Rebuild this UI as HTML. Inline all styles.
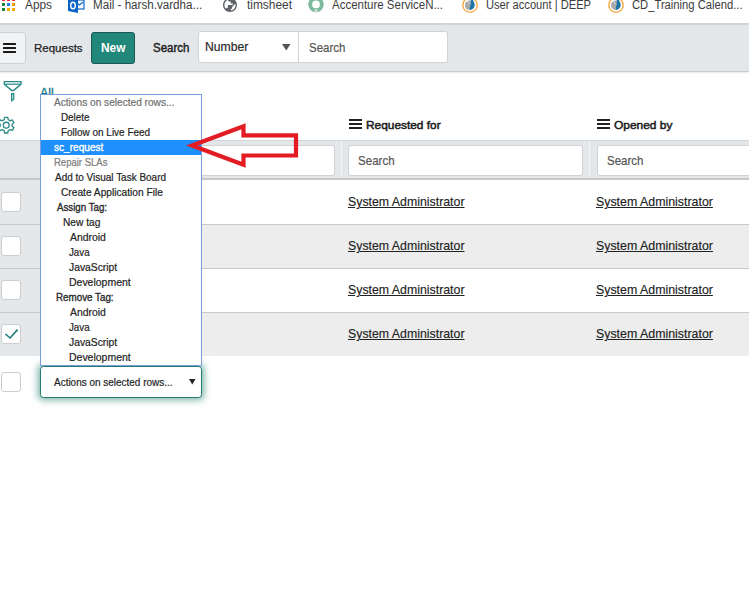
<!DOCTYPE html>
<html><head><meta charset="utf-8"><style>
html,body{margin:0;padding:0;width:749px;height:591px;overflow:hidden;background:#fff;position:relative;font-family:"Liberation Sans",sans-serif;}
.a{position:absolute;box-sizing:border-box;}
.t{position:absolute;white-space:nowrap;transform-origin:0 0;}
</style></head><body>
<!-- bookmarks bar -->
<div class="a" style="left:2px;top:-2px;width:3px;height:3px;background:#ee2a24"></div>
<div class="a" style="left:7px;top:-2px;width:3px;height:3px;background:#ee2a24"></div>
<div class="a" style="left:12px;top:-2px;width:3px;height:3px;background:#ee2a24"></div>
<div class="a" style="left:2px;top:3px;width:3px;height:3px;background:#1a8a3a"></div>
<div class="a" style="left:7px;top:3px;width:3px;height:3px;background:#1a7cf0"></div>
<div class="a" style="left:12px;top:3px;width:3px;height:3px;background:#ee9a00"></div>
<div class="a" style="left:2px;top:8px;width:3px;height:3px;background:#1a8a3a"></div>
<div class="a" style="left:7px;top:8px;width:3px;height:3px;background:#f8a800"></div>
<div class="a" style="left:12px;top:8px;width:3px;height:3px;background:#f8a800"></div>
<!-- outlook -->
<svg class="a" style="left:68px;top:-2px" width="17" height="15" viewBox="0 0 17 15">
  <rect x="7" y="2" width="9" height="9" fill="#fff" stroke="#0a64c8" stroke-width="1.2"/>
  <path d="M8 4 L11.5 7 L15 4" fill="none" stroke="#0a64c8" stroke-width="1.2"/>
  <path d="M0 2 L10 0 L10 15 L0 13 Z" fill="#0a64c8"/>
  <ellipse cx="5" cy="7.5" rx="2.3" ry="3.2" fill="none" stroke="#fff" stroke-width="1.4"/>
</svg>
<!-- globe -->
<svg class="a" style="left:223px;top:-2.5px;transform:scaleX(-1)" width="14" height="14" viewBox="2 2 20 20">
  <path fill-rule="evenodd" d="M12 2C6.48 2 2 6.48 2 12s4.48 10 10 10 10-4.48 10-10S17.52 2 12 2zm-1 17.93c-3.95-.49-7-3.85-7-7.93 0-.62.08-1.21.21-1.79L9 15v1c0 1.1.9 2 2 2v1.93zm6.9-2.54c-.26-.81-1-1.39-1.9-1.39h-1v-3c0-.55-.45-1-1-1H8v-2h2c.55 0 1-.45 1-1V7h2c1.1 0 2-.9 2-2v-.41c2.93 1.19 5 4.06 5 7.41 0 2.08-.8 3.97-2.1 5.39z" fill="#5f6368"/>
</svg>
<!-- accenture ring -->
<svg class="a" style="left:307px;top:-3px" width="18" height="16" viewBox="0 0 18 16">
  <circle cx="9" cy="7.4" r="5.8" fill="none" stroke="#7db99d" stroke-width="3.9"/>
  <rect x="7.5" y="12" width="3" height="3.5" fill="#fff" opacity="0.55"/>
</svg>
<!-- user account icons -->
<svg class="a" style="left:461px;top:-3px" width="18" height="17" viewBox="0 0 18 17">
  <circle cx="9" cy="8" r="7.2" fill="#fff" stroke="#f5a131" stroke-width="1.3"/>
  <circle cx="9" cy="8" r="5.3" fill="#dfe9ef"/>
  <circle cx="8.6" cy="8.3" r="4.6" fill="#a8a8a8"/>
  <path d="M8.2 4.8 C9.5 5.2 10.2 6.5 9.5 8 C9 9.5 8.5 11 9 12.9 C11.8 12.6 13.6 10.5 13.6 8 C13.6 5.6 12.5 4 11 3.3 C11.2 4.3 10.5 5.5 9.5 5.2 Z" fill="#1f74a6"/>
  <circle cx="11" cy="3.6" r="1.3" fill="#1f74a6"/>
  <path d="M6 4.2 C7.5 5 8.5 6 9 7.2" stroke="#e4eef4" stroke-width="0.9" fill="none"/>
</svg>
<svg class="a" style="left:607px;top:-3px" width="18" height="17" viewBox="0 0 18 17">
  <circle cx="9" cy="8" r="7.2" fill="#fff" stroke="#f5a131" stroke-width="1.3"/>
  <circle cx="9" cy="8" r="5.3" fill="#dfe9ef"/>
  <circle cx="8.6" cy="8.3" r="4.6" fill="#a8a8a8"/>
  <path d="M8.2 4.8 C9.5 5.2 10.2 6.5 9.5 8 C9 9.5 8.5 11 9 12.9 C11.8 12.6 13.6 10.5 13.6 8 C13.6 5.6 12.5 4 11 3.3 C11.2 4.3 10.5 5.5 9.5 5.2 Z" fill="#1f74a6"/>
  <circle cx="11" cy="3.6" r="1.3" fill="#1f74a6"/>
  <path d="M6 4.2 C7.5 5 8.5 6 9 7.2" stroke="#e4eef4" stroke-width="0.9" fill="none"/>
</svg>

<!-- header -->
<div class="a" style="left:0;top:23px;width:749px;height:49px;background:#e4e7ea;border-top:2px solid #d0d4d8;border-bottom:1.5px solid #c9cbcd"></div>
<div class="a" style="left:0;top:72px;width:749px;height:2px;background:linear-gradient(#e8e8e8,#fff)"></div>
<!-- hamburger btn -->
<div class="a" style="left:-4px;top:32px;width:30px;height:32px;background:#f1f2f3;border:1px solid #cfd2d5;border-radius:3px"></div>
<div class="a" style="left:3px;top:43px;width:13px;height:1.8px;background:#1a1a1a;border-radius:0.5px"></div>
<div class="a" style="left:3px;top:47px;width:13px;height:1.8px;background:#1a1a1a;border-radius:0.5px"></div>
<div class="a" style="left:3px;top:51px;width:13px;height:1.8px;background:#1a1a1a;border-radius:0.5px"></div>
<!-- new btn -->
<div class="a" style="left:91px;top:31.5px;width:44px;height:32.5px;background:#21877a;border:1px solid #175a50;border-radius:3px"></div>
<!-- select Number -->
<div class="a" style="left:198px;top:31px;width:250px;height:31.5px;background:#fff;border:1px solid #cfd3d6;border-radius:3px"></div>
<div class="a" style="left:298px;top:32px;width:1px;height:30px;background:#cfd3d6"></div>
<svg class="a" style="left:282px;top:44px" width="9" height="7" viewBox="0 0 9 7"><path d="M0 0 L8.5 0 L4.25 6.5 Z" fill="#555"/></svg>

<!-- filter icon -->
<svg class="a" style="left:2px;top:79px" width="22" height="24" viewBox="0 0 22 24">
  <path d="M2.3 2.6 H19 V5.2 L11.4 11.6 H9.9 L2.3 5.2 Z" fill="none" stroke="#2a8a85" stroke-width="1.4" stroke-linejoin="round"/>
  <path d="M2.3 5.2 H19" stroke="#2a8a85" stroke-width="1.2"/>
  <path d="M9.6 14.6 H11.8 V20.2 L9.6 21.8 Z" fill="#bfe8d8" stroke="#2a8a85" stroke-width="1.2"/>
</svg>
<!-- gear icon -->
<svg class="a" style="left:-2.6px;top:116px" width="18.4" height="18.4" viewBox="0 0 20 20">
  <path d="M8.3 1.5 H11.7 L12.2 4 L14.3 5.2 L16.7 4.3 L18.4 7.2 L16.5 8.9 V11.1 L18.4 12.8 L16.7 15.7 L14.3 14.8 L12.2 16 L11.7 18.5 H8.3 L7.8 16 L5.7 14.8 L3.3 15.7 L1.6 12.8 L3.5 11.1 V8.9 L1.6 7.2 L3.3 4.3 L5.7 5.2 L7.8 4 Z" fill="none" stroke="#2a8a85" stroke-width="1.4" stroke-linejoin="round"/>
  <circle cx="10" cy="10" r="3.2" fill="none" stroke="#2a8a85" stroke-width="1.4"/>
</svg>
<!-- column header icons -->
<div class="a" style="left:349px;top:119px;width:13px;height:2px;background:#222"></div>
<div class="a" style="left:349px;top:123px;width:13px;height:2px;background:#222"></div>
<div class="a" style="left:349px;top:127px;width:13px;height:2px;background:#222"></div>
<div class="a" style="left:597px;top:119px;width:13px;height:2px;background:#222"></div>
<div class="a" style="left:597px;top:123px;width:13px;height:2px;background:#222"></div>
<div class="a" style="left:597px;top:127px;width:13px;height:2px;background:#222"></div>

<!-- search row -->
<div class="a" style="left:0;top:140px;width:749px;height:40px;background:#e4e7ea;border-top:1px solid #d2d5d8;border-bottom:2px solid #c6c8ca"></div>
<div class="a" style="left:341px;top:141px;width:1px;height:37px;background:#f4f5f6"></div>
<div class="a" style="left:589px;top:141px;width:1px;height:37px;background:#f4f5f6"></div>
<div class="a" style="left:150px;top:145px;width:184.5px;height:31px;background:#fff;border:1px solid #d0d3d6;border-radius:3px"></div>
<div class="a" style="left:348px;top:145px;width:234.5px;height:31px;background:#fff;border:1px solid #d0d3d6;border-radius:3px"></div>
<div class="a" style="left:596.5px;top:145px;width:200px;height:31px;background:#fff;border:1px solid #d0d3d6;border-radius:3px"></div>

<!-- rows -->
<div class="a" style="left:0;top:180px;width:749px;height:44px;background:#fff"></div>
<div class="a" style="left:0;top:224px;width:749px;height:1px;background:#c9c9c9"></div>
<div class="a" style="left:0;top:225px;width:749px;height:43px;background:#ededed"></div>
<div class="a" style="left:0;top:268px;width:749px;height:1px;background:#c9c9c9"></div>
<div class="a" style="left:0;top:269px;width:749px;height:43px;background:#fff"></div>
<div class="a" style="left:0;top:312px;width:749px;height:1px;background:#c9c9c9"></div>
<div class="a" style="left:0;top:313px;width:749px;height:43px;background:#ededed"></div>
<!-- left column gray -->
<div class="a" style="left:0;top:180px;width:40px;height:44px;background:#e4e8eb"></div>
<div class="a" style="left:0;top:225px;width:40px;height:43px;background:#e4e8eb"></div>
<div class="a" style="left:0;top:269px;width:40px;height:43px;background:#e4e8eb"></div>
<div class="a" style="left:0;top:313px;width:40px;height:43px;background:#e4e8eb"></div>
<!-- checkboxes -->
<div class="a" style="left:1px;top:192px;width:19.5px;height:19.5px;background:#fff;border:1px solid #cdcdcd;border-radius:3px"></div>
<div class="a" style="left:1px;top:236px;width:19.5px;height:19.5px;background:#fff;border:1px solid #cdcdcd;border-radius:3px"></div>
<div class="a" style="left:1px;top:280px;width:19.5px;height:19.5px;background:#fff;border:1px solid #cdcdcd;border-radius:3px"></div>
<div class="a" style="left:1px;top:324px;width:19.5px;height:19.5px;background:#fff;border:1px solid #cdcdcd;border-radius:3px"></div>
<svg class="a" style="left:1px;top:324px" width="20" height="20" viewBox="0 0 20 20"><path d="M4.4 10 L9.1 14 L16.6 5.6" fill="none" stroke="#1f7a78" stroke-width="1.6"/></svg>
<div class="a" style="left:1px;top:372.3px;width:19.5px;height:19.3px;background:#fff;border:1px solid #cdcdcd;border-radius:3px"></div>

<!-- dropdown list -->
<div class="a" style="z-index:6;left:40px;top:94px;width:162px;height:272px;background:#fff;border:1px solid #7a9edb"></div>
<div class="a" style="z-index:6;left:41px;top:140px;width:160px;height:15px;background:#1e8ffb"></div>
<!-- select -->
<div class="a" style="z-index:5;left:40px;top:366px;width:162px;height:31.5px;background:#fff;border:1.8px solid #26796f;border-radius:3.5px;box-shadow:0 0 7px 1.5px rgba(30,128,110,0.6)"></div>
<svg class="a" style="z-index:7;left:189px;top:379px" width="7" height="6" viewBox="0 0 7 6"><path d="M0 0 L6.5 0 L3.25 5.5 Z" fill="#222"/></svg>

<!-- red arrow -->
<svg class="a" style="z-index:7;left:180px;top:118px" width="125" height="55" viewBox="180 118 125 55">
  <path d="M192 145.5 L243.5 126.2 L243.5 135.4 L296 135.4 L296 155.5 L243.5 155.5 L243.5 164.8 Z" fill="none" stroke="#e31b23" stroke-width="4.2" stroke-linejoin="miter" stroke-miterlimit="10"/>
</svg>

<div id="t0" class="t" style="left:25.10px;top:-1.76px;font-size:12px;line-height:14.40px;font-weight:400;color:#3c3c3c;transform:scaleX(0.9869);">Apps</div>
<div id="t1" class="t" style="left:92.80px;top:-1.76px;font-size:12px;line-height:14.40px;font-weight:400;color:#3c3c3c;transform:scaleX(0.9688);">Mail - harsh.vardha...</div>
<div id="t2" class="t" style="left:247.00px;top:-1.76px;font-size:12px;line-height:14.40px;font-weight:400;color:#3c3c3c;transform:scaleX(0.9921);">timsheet</div>
<div id="t3" class="t" style="left:332.00px;top:-1.76px;font-size:12px;line-height:14.40px;font-weight:400;color:#3c3c3c;transform:scaleX(0.9565);">Accenture ServiceN...</div>
<div id="t4" class="t" style="left:486.00px;top:-1.76px;font-size:12px;line-height:14.40px;font-weight:400;color:#3c3c3c;transform:scaleX(0.9278);">User account | DEEP</div>
<div id="t5" class="t" style="left:632.40px;top:-1.76px;font-size:12px;line-height:14.40px;font-weight:400;color:#3c3c3c;transform:scaleX(0.9351);">CD_Training Calend...</div>
<div id="t6" class="t" style="left:33.60px;top:41.03px;font-size:11.8px;line-height:14.16px;font-weight:400;color:#222;transform:scaleX(0.9750);-webkit-text-stroke:0.25px #222;">Requests</div>
<div id="t7" class="t" style="left:101.40px;top:40.67px;font-size:12.6px;line-height:15.12px;font-weight:700;color:#fff;transform:scaleX(0.9419);">New</div>
<div id="t8" class="t" style="left:152.50px;top:40.67px;font-size:12.6px;line-height:15.12px;font-weight:400;color:#222;transform:scaleX(0.9096);-webkit-text-stroke:0.45px #222;">Search</div>
<div id="t9" class="t" style="left:205.40px;top:39.10px;font-size:13px;line-height:15.60px;font-weight:400;color:#2a2a2a;transform:scaleX(0.9362);-webkit-text-stroke:0.2px #2a2a2a;">Number</div>
<div id="t10" class="t" style="left:308.80px;top:40.10px;font-size:13px;line-height:15.60px;font-weight:400;color:#555;transform:scaleX(0.8834);-webkit-text-stroke:0.2px #555;">Search</div>
<div id="t11" class="t" style="left:39.70px;top:84.60px;font-size:13px;line-height:15.60px;font-weight:400;color:#17788a;transform:scaleX(0.9548);-webkit-text-stroke:0.3px #17788a;">All</div>
<div id="t12" class="t" style="left:366.40px;top:117.83px;font-size:11.8px;line-height:14.16px;font-weight:400;color:#1a1a1a;transform:scaleX(1.0066);-webkit-text-stroke:0.5px #1a1a1a;">Requested for</div>
<div id="t13" class="t" style="left:614.40px;top:117.83px;font-size:11.8px;line-height:14.16px;font-weight:400;color:#1a1a1a;transform:scaleX(1.0118);-webkit-text-stroke:0.5px #1a1a1a;">Opened by</div>
<div id="t14" class="t" style="left:358.40px;top:154.37px;font-size:12.6px;line-height:15.12px;font-weight:400;color:#555;transform:scaleX(0.9171);-webkit-text-stroke:0.2px #555;">Search</div>
<div id="t15" class="t" style="left:606.50px;top:154.37px;font-size:12.6px;line-height:15.12px;font-weight:400;color:#555;transform:scaleX(0.9146);-webkit-text-stroke:0.2px #555;">Search</div>
<div id="t16" class="t" style="left:348.40px;top:194.10px;font-size:13px;line-height:15.60px;font-weight:400;color:#222;transform:scaleX(0.9485);text-decoration:underline;-webkit-text-stroke:0.15px #222;">System Administrator</div>
<div id="t17" class="t" style="left:596.40px;top:194.10px;font-size:13px;line-height:15.60px;font-weight:400;color:#222;transform:scaleX(0.9517);text-decoration:underline;-webkit-text-stroke:0.15px #222;">System Administrator</div>
<div id="t18" class="t" style="left:348.40px;top:238.10px;font-size:13px;line-height:15.60px;font-weight:400;color:#222;transform:scaleX(0.9485);text-decoration:underline;-webkit-text-stroke:0.15px #222;">System Administrator</div>
<div id="t19" class="t" style="left:596.40px;top:238.10px;font-size:13px;line-height:15.60px;font-weight:400;color:#222;transform:scaleX(0.9517);text-decoration:underline;-webkit-text-stroke:0.15px #222;">System Administrator</div>
<div id="t20" class="t" style="left:348.40px;top:282.10px;font-size:13px;line-height:15.60px;font-weight:400;color:#222;transform:scaleX(0.9485);text-decoration:underline;-webkit-text-stroke:0.15px #222;">System Administrator</div>
<div id="t21" class="t" style="left:596.40px;top:282.10px;font-size:13px;line-height:15.60px;font-weight:400;color:#222;transform:scaleX(0.9517);text-decoration:underline;-webkit-text-stroke:0.15px #222;">System Administrator</div>
<div id="t22" class="t" style="left:348.40px;top:326.10px;font-size:13px;line-height:15.60px;font-weight:400;color:#222;transform:scaleX(0.9485);text-decoration:underline;-webkit-text-stroke:0.15px #222;">System Administrator</div>
<div id="t23" class="t" style="left:596.40px;top:326.10px;font-size:13px;line-height:15.60px;font-weight:400;color:#222;transform:scaleX(0.9517);text-decoration:underline;-webkit-text-stroke:0.15px #222;">System Administrator</div>
<div id="t24" class="t" style="left:53.60px;top:96.19px;font-size:11px;line-height:13.20px;font-weight:400;color:#6e6e6e;transform:scaleX(0.9202);z-index:7;-webkit-text-stroke:0.2px #6e6e6e;">Actions on selected rows...</div>
<div id="t25" class="t" style="left:60.50px;top:111.19px;font-size:11px;line-height:13.20px;font-weight:400;color:#222;transform:scaleX(0.8963);z-index:7;-webkit-text-stroke:0.2px #222;">Delete</div>
<div id="t26" class="t" style="left:60.50px;top:126.19px;font-size:11px;line-height:13.20px;font-weight:400;color:#222;transform:scaleX(0.9050);z-index:7;-webkit-text-stroke:0.2px #222;">Follow on Live Feed</div>
<div id="t27" class="t" style="left:53.60px;top:141.19px;font-size:11px;line-height:13.20px;font-weight:400;color:#fff;transform:scaleX(0.9180);z-index:7;-webkit-text-stroke:0.35px #fff;">sc_request</div>
<div id="t28" class="t" style="left:53.60px;top:156.19px;font-size:11px;line-height:13.20px;font-weight:400;color:#7a7a7a;transform:scaleX(0.8646);z-index:7;-webkit-text-stroke:0.2px #7a7a7a;">Repair SLAs</div>
<div id="t29" class="t" style="left:54.60px;top:171.19px;font-size:11px;line-height:13.20px;font-weight:400;color:#222;transform:scaleX(0.9060);z-index:7;-webkit-text-stroke:0.2px #222;">Add to Visual Task Board</div>
<div id="t30" class="t" style="left:60.50px;top:186.19px;font-size:11px;line-height:13.20px;font-weight:400;color:#222;transform:scaleX(0.9258);z-index:7;-webkit-text-stroke:0.2px #222;">Create Application File</div>
<div id="t31" class="t" style="left:56.90px;top:201.19px;font-size:11px;line-height:13.20px;font-weight:400;color:#2a2a2a;transform:scaleX(0.8823);z-index:7;-webkit-text-stroke:0.35px #2a2a2a;">Assign Tag:</div>
<div id="t32" class="t" style="left:63.40px;top:216.19px;font-size:11px;line-height:13.20px;font-weight:400;color:#222;transform:scaleX(0.9242);z-index:7;-webkit-text-stroke:0.2px #222;">New tag</div>
<div id="t33" class="t" style="left:70.10px;top:231.19px;font-size:11px;line-height:13.20px;font-weight:400;color:#222;transform:scaleX(0.9467);z-index:7;-webkit-text-stroke:0.2px #222;">Android</div>
<div id="t34" class="t" style="left:68.90px;top:246.19px;font-size:11px;line-height:13.20px;font-weight:400;color:#222;transform:scaleX(0.8860);z-index:7;-webkit-text-stroke:0.2px #222;">Java</div>
<div id="t35" class="t" style="left:68.90px;top:261.19px;font-size:11px;line-height:13.20px;font-weight:400;color:#222;transform:scaleX(0.9385);z-index:7;-webkit-text-stroke:0.2px #222;">JavaScript</div>
<div id="t36" class="t" style="left:68.90px;top:276.19px;font-size:11px;line-height:13.20px;font-weight:400;color:#222;transform:scaleX(0.9517);z-index:7;-webkit-text-stroke:0.2px #222;">Development</div>
<div id="t37" class="t" style="left:56.40px;top:291.19px;font-size:11px;line-height:13.20px;font-weight:400;color:#2a2a2a;transform:scaleX(0.8915);z-index:7;-webkit-text-stroke:0.35px #2a2a2a;">Remove Tag:</div>
<div id="t38" class="t" style="left:70.10px;top:306.19px;font-size:11px;line-height:13.20px;font-weight:400;color:#222;transform:scaleX(0.9467);z-index:7;-webkit-text-stroke:0.2px #222;">Android</div>
<div id="t39" class="t" style="left:68.90px;top:321.19px;font-size:11px;line-height:13.20px;font-weight:400;color:#222;transform:scaleX(0.8860);z-index:7;-webkit-text-stroke:0.2px #222;">Java</div>
<div id="t40" class="t" style="left:68.90px;top:336.19px;font-size:11px;line-height:13.20px;font-weight:400;color:#222;transform:scaleX(0.9385);z-index:7;-webkit-text-stroke:0.2px #222;">JavaScript</div>
<div id="t41" class="t" style="left:68.90px;top:351.19px;font-size:11px;line-height:13.20px;font-weight:400;color:#222;transform:scaleX(0.9517);z-index:7;-webkit-text-stroke:0.2px #222;">Development</div>
<div id="t42" class="t" style="left:53.80px;top:375.89px;font-size:11px;line-height:13.20px;font-weight:400;color:#222;transform:scaleX(0.9057);z-index:7;-webkit-text-stroke:0.2px #222;">Actions on selected rows...</div>
</body></html>
